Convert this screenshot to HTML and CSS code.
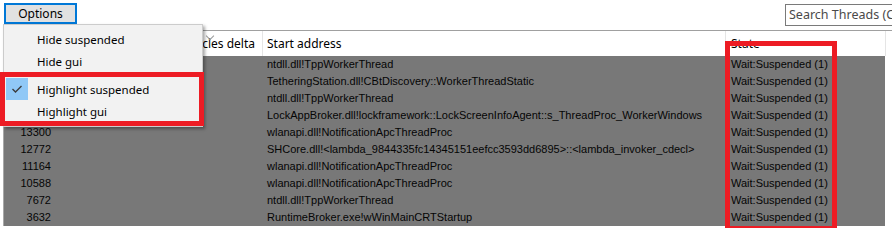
FILE: index.html
```html
<!DOCTYPE html>
<html>
<head>
<meta charset="utf-8">
<link rel="stylesheet" href="styles.css">
</head>
<body>
<div class="page">
  <div class="toolbar">
    <button class="btn">Options</button>
    <div class="search">Search Threads (Ctrl+K)</div>
  </div>
  <div class="grid">
    <div class="row head">
      <div class="c id"></div>
      <div class="c cpu"></div>
      <div class="c cyc"><span class="sort"></span>Cycles delta</div>
      <div class="c addr">Start address</div>
      <div class="c state">State</div>
      <div class="c fill"></div>
    </div>
    <div class="row"><div class="c id"></div><div class="c cpu"></div><div class="c cyc"></div><div class="c addr">ntdll.dll!TppWorkerThread</div><div class="c state">Wait:Suspended (1)</div><div class="c fill"></div></div>
    <div class="row"><div class="c id"></div><div class="c cpu"></div><div class="c cyc"></div><div class="c addr">TetheringStation.dll!CBtDiscovery::WorkerThreadStatic</div><div class="c state">Wait:Suspended (1)</div><div class="c fill"></div></div>
    <div class="row"><div class="c id"></div><div class="c cpu"></div><div class="c cyc"></div><div class="c addr">ntdll.dll!TppWorkerThread</div><div class="c state">Wait:Suspended (1)</div><div class="c fill"></div></div>
    <div class="row"><div class="c id"></div><div class="c cpu"></div><div class="c cyc"></div><div class="c addr">LockAppBroker.dll!lockframework::LockScreenInfoAgent::s_ThreadProc_WorkerWindows</div><div class="c state">Wait:Suspended (1)</div><div class="c fill"></div></div>
    <div class="row"><div class="c id">13300</div><div class="c cpu"></div><div class="c cyc"></div><div class="c addr">wlanapi.dll!NotificationApcThreadProc</div><div class="c state">Wait:Suspended (1)</div><div class="c fill"></div></div>
    <div class="row"><div class="c id">12772</div><div class="c cpu"></div><div class="c cyc"></div><div class="c addr">SHCore.dll!&lt;lambda_9844335fc14345151eefcc3593dd6895&gt;::&lt;lambda_invoker_cdecl&gt;</div><div class="c state">Wait:Suspended (1)</div><div class="c fill"></div></div>
    <div class="row"><div class="c id">11164</div><div class="c cpu"></div><div class="c cyc"></div><div class="c addr">wlanapi.dll!NotificationApcThreadProc</div><div class="c state">Wait:Suspended (1)</div><div class="c fill"></div></div>
    <div class="row"><div class="c id">10588</div><div class="c cpu"></div><div class="c cyc"></div><div class="c addr">wlanapi.dll!NotificationApcThreadProc</div><div class="c state">Wait:Suspended (1)</div><div class="c fill"></div></div>
    <div class="row"><div class="c id">7672</div><div class="c cpu"></div><div class="c cyc"></div><div class="c addr">ntdll.dll!TppWorkerThread</div><div class="c state">Wait:Suspended (1)</div><div class="c fill"></div></div>
    <div class="row"><div class="c id">3632</div><div class="c cpu"></div><div class="c cyc"></div><div class="c addr">RuntimeBroker.exe!wWinMainCRTStartup</div><div class="c state">Wait:Suspended (1)</div><div class="c fill"></div></div>
  </div>

  <div class="menu">
    <div class="item"><span class="chk"></span><span class="lbl">Hide suspended</span></div>
    <div class="item"><span class="chk"></span><span class="lbl">Hide gui</span></div>
    <div class="sep"></div>
    <div class="item"><span class="chk on"><svg width="22" height="22" viewBox="0 0 22 22"><path d="M6.5 11 L9.5 14 L15.5 8" fill="none" stroke="#3c3c3c" stroke-width="1.4"/></svg></span><span class="lbl">Highlight suspended</span></div>
    <div class="item"><span class="chk"></span><span class="lbl">Highlight gui</span></div>
  </div>

  <div class="mark mark-menu"></div>
  <div class="mark mark-state"></div>
</div>
</body>
</html>
```

FILE: styles.css
```css
html, body {
  margin: 0;
  padding: 0;
  background: #ffffff;
}
.page {
  position: relative;
  width: 892px;
  height: 228px;
  overflow: hidden;
  font-family: "Noto Sans", "Open Sans", sans-serif;
  font-size: 12px;
  color: #000;
}
.toolbar {
  height: 30px;
  display: flex;
  align-items: flex-start;
  justify-content: space-between;
}
.btn {
  margin: 3px 0 0 4px;
  width: 73px;
  height: 21px;
  padding: 0;
  background: #e1e1e1;
  border: 2px solid #0078d7;
  font-family: "Noto Sans", "Open Sans", sans-serif;
  font-size: 12px;
  line-height: 15px;
  color: #000;
}
.search {
  margin-top: 4px;
  width: 120px;
  margin-right: -13px;
  height: 22px;
  box-sizing: border-box;
  border: 1px solid #7a7a7a;
  padding-left: 3px;
  font-size: 12.5px;
  line-height: 19px;
  color: #4a4a4a;
  white-space: nowrap;
  overflow: hidden;
}
.grid {
  border-top: 1px solid #a0a0a0;
  margin-left: 3px;
  border-left: 1px solid #a8a8a8;
}
.row {
  display: flex;
  height: 17px;
  background: #787878;
  font-family: "Liberation Sans", sans-serif;
  font-size: 11px;
  line-height: 16px;
  color: #050505;
}
.row.head {
  height: 25px;
  line-height: 25px;
  background: #fff;
  font-family: "Noto Sans", "Open Sans", sans-serif;
  font-size: 12px;
  color: #000;
}
.c {
  white-space: nowrap;
  overflow: hidden;
  box-sizing: border-box;
  flex: none;
}
.id { width: 53px; text-align: right; padding-right: 6px; }
.cpu { width: 90px; }
.cyc { width: 115px; text-align: right; padding-right: 7px; position: relative; }
.addr { width: 463px; padding-left: 5px; }
.state { width: 160px; padding-left: 6px; }
.fill { flex: 1; background: #fff; }
.head .addr, .head .state { border-left: 1px solid #e5e5e5; padding-left: 4px; }
.head .state { padding-left: 5px; }
.head .fill { border-left: 1px solid #e5e5e5; }
.sort {
  position: absolute;
  left: 60px;
  top: 2px;
  width: 5px;
  height: 5px;
  border-right: 1px solid #9a9a9a;
  border-bottom: 1px solid #9a9a9a;
  transform: rotate(45deg);
}
.menu {
  position: absolute;
  left: 3px;
  top: 24px;
  width: 200px;
  height: 103px;
  box-sizing: border-box;
  background: #f2f2f2;
  border: 1px solid #cccccc;
  box-shadow: 2px 2px 3px rgba(0,0,0,0.35);
  padding: 3px 2px;
}
.item {
  display: flex;
  align-items: center;
  height: 22px;
}
.sep { height: 6px; }
.chk {
  width: 22px;
  height: 22px;
  flex: none;
}
.chk.on { background: #90c8f6; }
.chk svg { display: block; }
.lbl {
  margin-left: 9px;
  font-size: 11.5px;
}
.mark {
  position: absolute;
  border: 5px solid #ed1c24;
  box-sizing: border-box;
}
.mark-menu { left: 0; top: 72px; width: 204px; height: 54px; }
.mark-state { left: 725px; top: 41px; width: 112px; height: 190px; }
```
